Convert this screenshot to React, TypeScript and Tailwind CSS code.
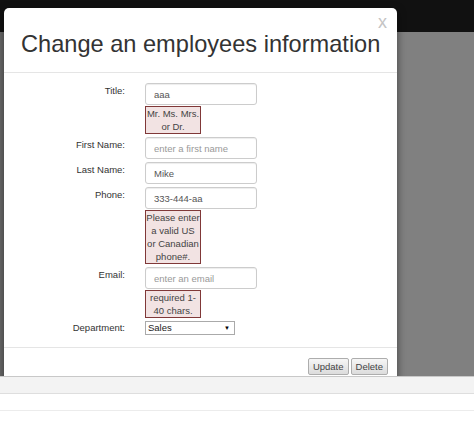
import React from "react";

type Row = {
  label: string;
  value?: string;
  placeholder?: string;
  error?: string;
};

const rows: Row[] = [
  { label: "Title:", value: "aaa", error: "Mr. Ms. Mrs. or Dr." },
  { label: "First Name:", placeholder: "enter a first name" },
  { label: "Last Name:", value: "Mike" },
  { label: "Phone:", value: "333-444-aa", error: "Please enter a valid US or Canadian phone#." },
  { label: "Email:", placeholder: "enter an email", error: "required 1-40 chars." },
];

const FieldRow = ({ row }: { row: Row }) => (
  <div className="flex mb-[3px]">
    <div className="w-[121px] pt-[1px] text-right text-[9.5px] leading-[13px] text-[#333]">{row.label}</div>
    <div className="ml-[20px]">
      <input
        readOnly
        defaultValue={row.value}
        placeholder={row.placeholder}
        className="block h-[22px] w-[112px] rounded-[3px] border border-[#ccc] bg-white pl-[8px] text-[9.5px] text-[#555] shadow-[inset_0_1px_1px_rgba(0,0,0,0.075)] outline-none placeholder:text-[#999]"
      />
      {row.error && (
        <div className="mt-[1px] w-[56px] border border-[#803838] bg-[#f2e3e3] text-center text-[9.5px] leading-[13px] text-[#444]">
          {row.error}
        </div>
      )}
    </div>
  </div>
);

const App = () => {
  return (
    <div className="h-[434px] w-[474px] overflow-hidden bg-white font-['Liberation_Sans',Arial,sans-serif]">
      <div className="relative h-[376px] overflow-hidden bg-[#808080]">
        <div className="h-[32px] bg-[#111]" />
        <div className="absolute bottom-0 left-0 top-[32px] w-[4px] bg-[#6b6b6b]" />

        {/* Modal */}
        <div className="absolute left-[4px] top-[8px] w-[393px] rounded-[5px] bg-white shadow-[0_3px_9px_rgba(0,0,0,0.5)]">
          <div className="relative border-b border-[#e5e5e5] px-[17px] pb-[15px] pt-[23px]">
            <h1 className="whitespace-nowrap text-[23.6px] font-normal leading-[26px] text-[#333]">
              Change an employees information
            </h1>
            <span className="absolute right-[10px] top-[5px] text-[18px] leading-[18px] text-[#c4c4c4]">x</span>
          </div>

          <div className="pb-[12px] pt-[10px]">
            {rows.map((r) => (
              <FieldRow key={r.label} row={r} />
            ))}
            <div className="flex">
              <div className="w-[121px] text-right text-[9.5px] leading-[14px] text-[#333]">Department:</div>
              <div className="ml-[20px] flex h-[14px] w-[90px] items-center justify-between border border-[#aaa] bg-white">
                <span className="pl-[2px] text-[9.5px] leading-[12px] text-[#222]">Sales</span>
                <span className="pr-[4px] text-[6px] leading-[12px] text-black">▼</span>
              </div>
            </div>
          </div>

          <div className="flex justify-end gap-[2px] border-t border-[#e5e5e5] pb-[10px] pr-[9px] pt-[10px]">
            <button className="h-[17px] rounded-[2px] border border-[#adadad] bg-gradient-to-b from-[#f6f6f6] to-[#dcdcdc] px-[4px] text-[9.5px] leading-[15px] text-[#444]">
              Update
            </button>
            <button className="h-[17px] rounded-[2px] border border-[#adadad] bg-gradient-to-b from-[#f6f6f6] to-[#dcdcdc] px-[4px] text-[9.5px] leading-[15px] text-[#444]">
              Delete
            </button>
          </div>
        </div>
      </div>

      <div className="h-[18px] border-b border-t border-b-[#dedede] border-t-[#c8c8c8] bg-[#f3f3f3]" />
      <div className="h-[17px] border-b border-[#ececec]" />
    </div>
  );
};

export default App;
